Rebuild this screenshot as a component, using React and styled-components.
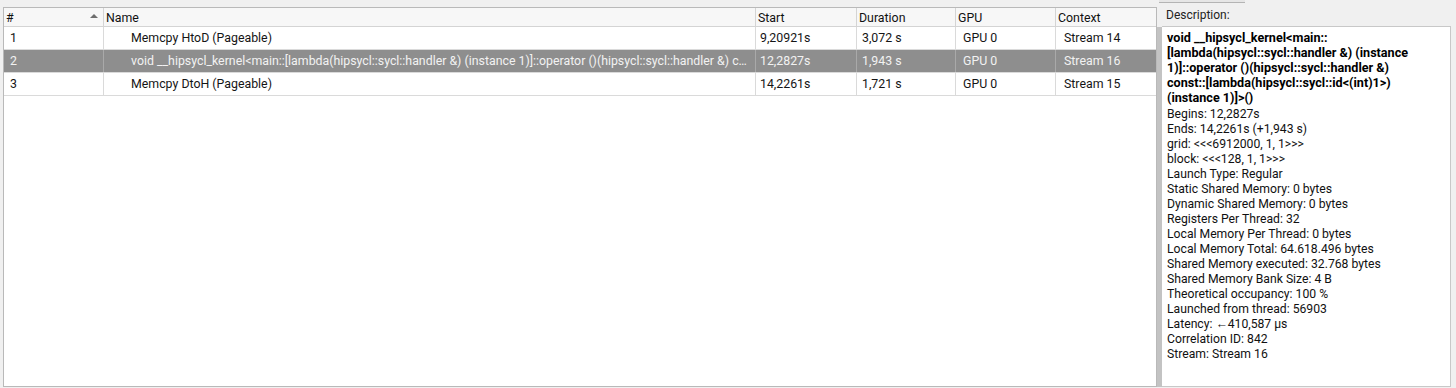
import React from "react";
import styled, { createGlobalStyle } from "styled-components";

const GlobalStyle = createGlobalStyle`
  html, body {
    margin: 0;
    padding: 0;
    background: #f0f0f0;
    font-family: Roboto, "Noto Sans", "Liberation Sans", sans-serif;
    font-size: 12px;
    color: #000;
  }
`;

const columns = [
  { key: "id", label: "#", width: 100, pad: 6, headPad: 2 },
  { key: "name", label: "Name", width: 652, pad: 27, headPad: 2 },
  { key: "start", label: "Start", width: 101, pad: 4, headPad: 2 },
  { key: "duration", label: "Duration", width: 99, pad: 5, headPad: 2 },
  { key: "gpu", label: "GPU", width: 100, pad: 7, headPad: 2 },
  { key: "context", label: "Context", width: 100, pad: 8, headPad: 2 },
];

const rows = [
  {
    id: "1",
    name: "Memcpy HtoD (Pageable)",
    start: "9,20921s",
    duration: "3,072 s",
    gpu: "GPU 0",
    context: "Stream 14",
  },
  {
    id: "2",
    name:
      "void __hipsycl_kernel<main::[lambda(hipsycl::sycl::handler &) (instance 1)]::operator ()(hipsycl::sycl::handler &) const::[lambda(hipsycl::sycl::id<(int)1>) (instance 1)]>()",
    start: "12,2827s",
    duration: "1,943 s",
    gpu: "GPU 0",
    context: "Stream 16",
    selected: true,
  },
  {
    id: "3",
    name: "Memcpy DtoH (Pageable)",
    start: "14,2261s",
    duration: "1,721 s",
    gpu: "GPU 0",
    context: "Stream 15",
  },
];

const titleLines = [
  "void __hipsycl_kernel<main::",
  "[lambda(hipsycl::sycl::handler &) (instance",
  "1)]::operator ()(hipsycl::sycl::handler &)",
  "const::[lambda(hipsycl::sycl::id<(int)1>)",
  "(instance 1)]>()",
];

const details = [
  "Begins: 12,2827s",
  "Ends: 14,2261s (+1,943 s)",
  "grid:  <<<6912000, 1, 1>>>",
  "block: <<<128, 1, 1>>>",
  "Launch Type: Regular",
  "Static Shared Memory: 0 bytes",
  "Dynamic Shared Memory: 0 bytes",
  "Registers Per Thread: 32",
  "Local Memory Per Thread: 0 bytes",
  "Local Memory Total: 64.618.496 bytes",
  "Shared Memory executed: 32.768 bytes",
  "Shared Memory Bank Size: 4 B",
  "Theoretical occupancy: 100 %",
  "Launched from thread: 56903",
  "Latency: \u2190410,587 \u03bcs",
  "Correlation ID: 842",
  "Stream: Stream 16",
];

const Page = styled.div`
  width: 1456px;
  height: 388px;
  display: flex;
  flex-direction: column;
  overflow: hidden;
`;

const TopStrip = styled.div`
  height: 7px;
  flex: none;
  display: flex;
  justify-content: flex-end;
  padding-right: 211px;
`;

const TabStub = styled.div`
  width: 86px;
  height: 2px;
  border-bottom: 1px solid #b4b4b4;
  background: #e6e6e6;
`;

const Body = styled.div`
  flex: 1;
  display: flex;
  padding-left: 3px;
  padding-bottom: 1px;
  min-height: 0;
`;

const Table = styled.div`
  width: 1152px;
  border: 1px solid #b9b9b9;
  background: #fff;
  display: flex;
  flex-direction: column;
  font-size: 12.35px;
`;

const HeaderRow = styled.div`
  display: flex;
  height: 18px;
  background: #f7f7f7;
  border-bottom: 1px solid #d4d4d4;
`;

const HeaderCell = styled.div`
  position: relative;
  width: ${(p) => p.$w}px;
  flex: none;
  box-sizing: border-box;
  padding-left: ${(p) => p.$pad}px;
  border-right: ${(p) => (p.$last ? "none" : "1px solid #d4d4d4")};
  line-height: 20px;
  white-space: nowrap;
  color: #111;
`;

const SortArrow = styled.span`
  position: absolute;
  right: 5px;
  top: 6px;
  width: 0;
  height: 0;
  border-left: 4px solid transparent;
  border-right: 4px solid transparent;
  border-bottom: 4px solid #6e6e6e;
`;

const Row = styled.div`
  display: flex;
  height: 22px;
  background: ${(p) => (p.$selected ? "#8e8e8e" : "#fff")};
  color: ${(p) => (p.$selected ? "#f2f2f2" : "#151515")};
  border-bottom: 1px solid #dadada;
`;

const Cell = styled.div`
  width: ${(p) => p.$w}px;
  flex: none;
  box-sizing: border-box;
  padding-left: ${(p) => p.$pad}px;
  padding-right: 4px;
  border-right: ${(p) =>
    p.$last ? "none" : p.$selected ? "1px solid #a9a9a9" : "1px solid #dadada"};
  line-height: 22px;
  white-space: nowrap;
  overflow: hidden;
  text-overflow: ellipsis;
`;

const Splitter = styled.div`
  width: 5px;
  flex: none;
  display: flex;
  flex-direction: column;
`;

const SplitterBar = styled.div`
  margin-top: 20px;
  flex: 1;
  background: #c3c3c3;
`;

const Side = styled.div`
  width: 289px;
  flex: none;
  display: flex;
  flex-direction: column;
`;

const SideLabel = styled.div`
  height: 19px;
  line-height: 16px;
  padding-left: 4px;
  color: #222;
`;

const DescBox = styled.div`
  flex: 1;
  background: #fff;
  border: 1px solid #c8c8c8;
  border-left: none;
  padding: 3px 0 0 5px;
  line-height: 15px;
  color: #111;
  font-size: 12.2px;
`;

const Line = styled.div`
  white-space: nowrap;
  font-weight: ${(p) => (p.$bold ? 700 : 400)};
  font-size: ${(p) => (p.$bold ? "12.6px" : "12.2px")};
  color: ${(p) => (p.$bold ? "#000" : "#111")};
  margin-bottom: ${(p) => (p.$gap ? 2 : 0)}px;
`;

export default function App() {
  return (
    <>
      <GlobalStyle />
      <Page>
        <TopStrip>
          <TabStub />
        </TopStrip>
        <Body>
          <Table>
            <HeaderRow>
              {columns.map((c, i) => (
                <HeaderCell
                  key={c.key}
                  $w={c.width}
                  $pad={c.headPad}
                  $last={i === columns.length - 1}
                >
                  {c.label}
                  {c.key === "id" && <SortArrow />}
                </HeaderCell>
              ))}
            </HeaderRow>
            {rows.map((r) => (
              <Row key={r.id} $selected={r.selected}>
                {columns.map((c, i) => (
                  <Cell
                    key={c.key}
                    $w={c.width}
                    $pad={c.pad}
                    $selected={r.selected}
                    $last={i === columns.length - 1}
                  >
                    {r[c.key]}
                  </Cell>
                ))}
              </Row>
            ))}
          </Table>
          <Splitter>
            <SplitterBar />
          </Splitter>
          <Side>
            <SideLabel>Description:</SideLabel>
            <DescBox>
              {titleLines.map((t, i) => (
                <Line key={t} $bold $gap={i === titleLines.length - 1}>
                  {t}
                </Line>
              ))}
              {details.map((d) => (
                <Line key={d}>{d}</Line>
              ))}
            </DescBox>
          </Side>
        </Body>
      </Page>
    </>
  );
}
